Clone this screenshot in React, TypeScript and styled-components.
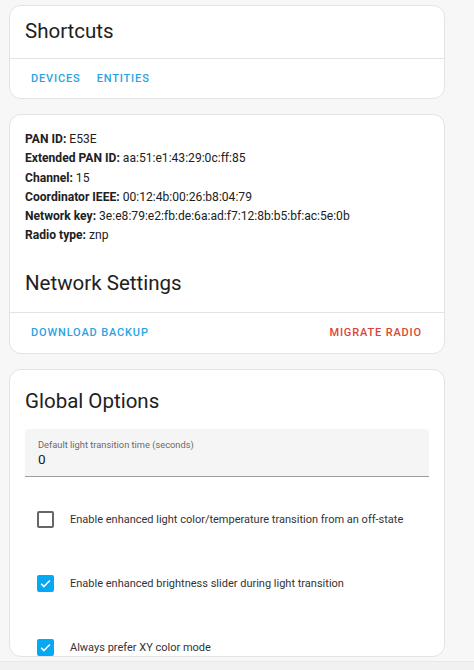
import React from 'react'
import styled, { createGlobalStyle } from 'styled-components'

const Global = createGlobalStyle`
  html, body {
    margin: 0;
    padding: 0;
    background: #f7f7f7;
    font-family: Roboto, "Noto Sans", "Liberation Sans", sans-serif;
    color: #212121;
  }
`

const Page = styled.div`
  width: 436px;
  padding: 5px 0 40px 9px;
  display: flex;
  flex-direction: column;
  gap: 15px;
`

const Card = styled.div`
  background: #fff;
  border: 1px solid #e3e3e3;
  border-radius: 12px;
  overflow: hidden;
`

const Title = styled.h1<{ $pt?: number; $pb?: number }>`
  margin: 0;
  padding: ${p => p.$pt ?? 11}px 15px ${p => p.$pb ?? 13}px;
  font-size: 20.5px;
  line-height: 28px;
  font-weight: 400;
  color: #212121;
`

const Actions = styled.div<{ $spread?: boolean; $h?: number }>`
  border-top: 1px solid #e3e3e3;
  height: ${p => p.$h ?? 40}px;
  padding: 0 14px 0 13px;
  display: flex;
  align-items: center;
  justify-content: ${p => (p.$spread ? 'space-between' : 'flex-start')};
  gap: 0;
`

const Btn = styled.button<{ $danger?: boolean }>`
  border: none;
  background: none;
  padding: 0 8px;
  height: 32px;
  font-family: inherit;
  font-size: 11px;
  font-weight: 500;
  letter-spacing: 0.85px;
  text-transform: uppercase;
  color: ${p => (p.$danger ? '#db4437' : '#2ba3e3')};
  cursor: pointer;
`

const Info = styled.div`
  padding: 15px 15px 0;
  font-size: 12.1px;
  line-height: 19.3px;
  color: #212121;
`

const Line = styled.div`
  white-space: nowrap;
  b {
    font-weight: 700;
  }
`

const Body = styled.div`
  padding: 0 15px;
`

const Field = styled.div`
  height: 48px;
  background: #f5f5f5;
  border-bottom: 1px solid #9e9e9e;
  border-radius: 4px 4px 0 0;
  padding: 10px 13px 0;
  box-sizing: border-box;
`

const FieldLabel = styled.div`
  font-size: 9.3px;
  line-height: 12px;
  color: #6b6b6b;
`

const FieldValue = styled.div`
  font-size: 13.5px;
  line-height: 17px;
  color: #212121;
`

const Options = styled.div`
  padding: 34px 0 0 12px;
  display: flex;
  flex-direction: column;
  gap: 47px;
`

const Option = styled.label`
  display: flex;
  align-items: center;
  gap: 16px;
  height: 17px;
  font-size: 11px;
  color: #333;
`

const Box = styled.span<{ $on?: boolean }>`
  width: 17px;
  height: 17px;
  box-sizing: border-box;
  border-radius: 2px;
  border: 2px solid ${p => (p.$on ? '#03a9f4' : '#666')};
  background: ${p => (p.$on ? '#03a9f4' : '#fff')};
  display: flex;
  align-items: center;
  justify-content: center;
  flex-shrink: 0;
`

const BottomBar = styled.div`
  position: fixed;
  left: 0;
  right: 0;
  top: 661px;
  height: 9px;
  background: #f1f1f1;
  border-top: 1px solid #e9e9e9;
`

const Check = () => (
  <svg width="13" height="13" viewBox="0 0 24 24">
    <path d="M4 12.5l5 5L20 6.5" fill="none" stroke="#fff" strokeWidth="3" />
  </svg>
)

const info: [string, string][] = [
  ['PAN ID:', 'E53E'],
  ['Extended PAN ID:', 'aa:51:e1:43:29:0c:ff:85'],
  ['Channel:', '15'],
  ['Coordinator IEEE:', '00:12:4b:00:26:b8:04:79'],
  ['Network key:', '3e:e8:79:e2:fb:de:6a:ad:f7:12:8b:b5:bf:ac:5e:0b'],
  ['Radio type:', 'znp'],
]

const options = [
  { label: 'Enable enhanced light color/temperature transition from an off-state', on: false },
  { label: 'Enable enhanced brightness slider during light transition', on: true },
  { label: 'Always prefer XY color mode', on: true },
]

export default function App() {
  return (
    <>
      <Global />
      <Page>
        <Card>
          <Title>Shortcuts</Title>
          <Actions $h={39}>
            <Btn>Devices</Btn>
            <Btn>Entities</Btn>
          </Actions>
        </Card>

        <Card>
          <Info>
            {info.map(([k, v]) => (
              <Line key={k}>
                <b>{k}</b> {v}
              </Line>
            ))}
          </Info>
          <Title $pt={23} $pb={15}>Network Settings</Title>
          <Actions $spread>
            <Btn>Download Backup</Btn>
            <Btn $danger>Migrate Radio</Btn>
          </Actions>
        </Card>

        <Card>
          <Title $pt={17} $pb={14}>Global Options</Title>
          <Body>
            <Field>
              <FieldLabel>Default light transition time (seconds)</FieldLabel>
              <FieldValue>0</FieldValue>
            </Field>
            <Options>
              {options.map(o => (
                <Option key={o.label}>
                  <Box $on={o.on}>{o.on && <Check />}</Box>
                  {o.label}
                </Option>
              ))}
            </Options>
          </Body>
        </Card>
      </Page>
      <BottomBar />
    </>
  )
}
